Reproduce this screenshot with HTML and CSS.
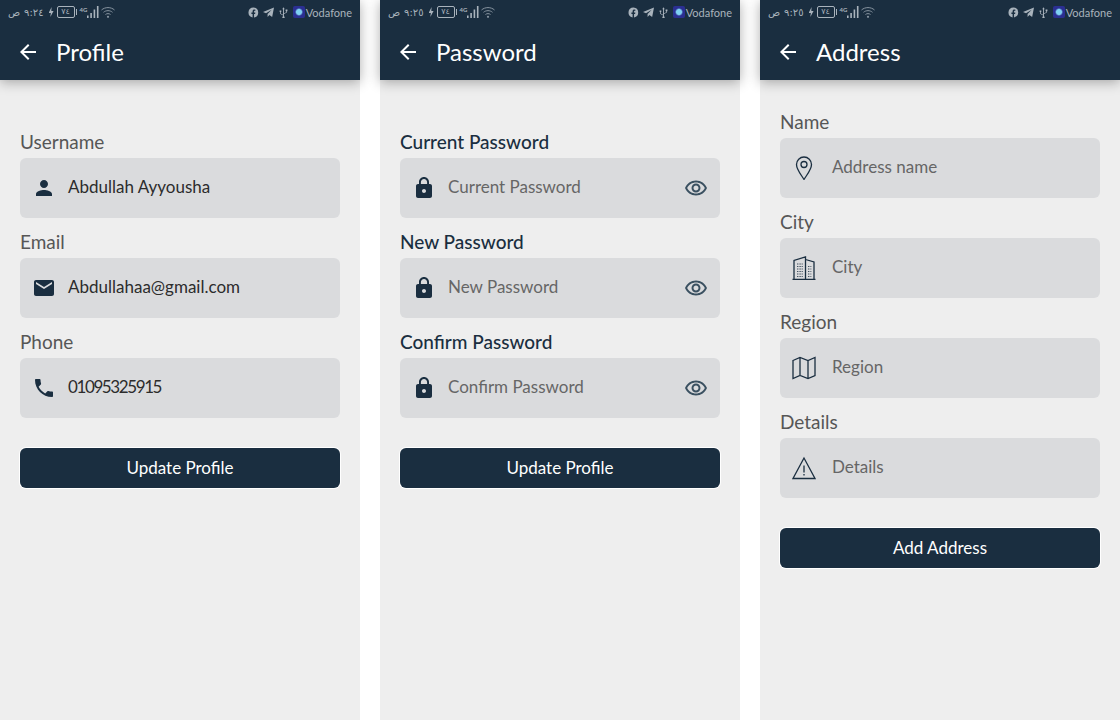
FILE: index.html
```html
<!DOCTYPE html>
<html lang="en">

<head>
    <meta charset="UTF-8">
    <title>Profile screens</title>
    <link rel="stylesheet" href="styles.css">
</head>

<body>

    <!-- shared icons -->
    <svg class="icon-defs" width="0" height="0">
        <symbol id="i-back" viewBox="0 0 24 24"><path d="M20 11H7.83l5.59-5.59L12 4l-8 8 8 8 1.41-1.41L7.83 13H20v-2z"/></symbol>
        <symbol id="i-person" viewBox="0 0 24 24"><path d="M12 12c2.21 0 4-1.79 4-4s-1.79-4-4-4-4 1.79-4 4 1.79 4 4 4zm0 2c-2.67 0-8 1.34-8 4v2h16v-2c0-2.66-5.33-4-8-4z"/></symbol>
        <symbol id="i-mail" viewBox="0 0 24 24"><path d="M20 4H4c-1.1 0-1.99.9-1.99 2L2 18c0 1.1.9 2 2 2h16c1.1 0 2-.9 2-2V6c0-1.1-.9-2-2-2zm0 4l-8 5-8-5V6l8 5 8-5v2z"/></symbol>
        <symbol id="i-phone" viewBox="0 0 24 24"><path d="M6.62 10.79c1.44 2.83 3.76 5.14 6.59 6.59l2.2-2.2c.27-.27.67-.36 1.02-.24 1.12.37 2.33.57 3.57.57.55 0 1 .45 1 1V20c0 .55-.45 1-1 1-9.39 0-17-7.61-17-17 0-.55.45-1 1-1h3.5c.55 0 1 .45 1 1 0 1.25.2 2.45.57 3.57.11.35.03.74-.25 1.02l-2.2 2.2z"/></symbol>
        <symbol id="i-lock" viewBox="0 0 24 24"><path d="M18 8h-1V6c0-2.76-2.24-5-5-5S7 3.24 7 6v2H6c-1.1 0-2 .9-2 2v10c0 1.1.9 2 2 2h12c1.1 0 2-.9 2-2V10c0-1.1-.9-2-2-2zm-6 9c-1.1 0-2-.9-2-2s.9-2 2-2 2 .9 2 2-.9 2-2 2zm3.100-9H8.900V6c0-1.710 1.390-3.100 3.100-3.100 1.710 0 3.100 1.390 3.100 3.100v2z"/></symbol>
        <symbol id="i-eye" viewBox="0 0 24 24"><path d="M12 6.500c3.790 0 7.170 2.130 8.820 5.500-1.650 3.370-5.020 5.500-8.820 5.500S4.830 15.370 3.180 12C4.830 8.630 8.210 6.500 12 6.500m0-2C7 4.500 2.730 7.610 1 12c1.730 4.390 6 7.500 11 7.500s9.270-3.110 11-7.500c-1.730-4.390-6-7.500-11-7.500zm0 5c1.380 0 2.500 1.120 2.500 2.500s-1.120 2.500-2.500 2.500-2.500-1.120-2.500-2.500 1.120-2.500 2.500-2.500m0-2c-2.480 0-4.500 2.020-4.500 4.500s2.020 4.500 4.500 4.500 4.500-2.020 4.500-4.500-2.020-4.500-4.500-4.500z"/></symbol>
        <symbol id="i-pin" viewBox="0 0 24 24"><g class="line"><path d="M12 23.500C9 18.500 4.500 13.500 4.500 8.500a7.500 7.500 0 0 1 15 0c0 5-4.500 10-7.500 15z"/><circle cx="12" cy="8.500" r="3"/></g></symbol>
        <symbol id="i-city" viewBox="0 0 24 24"><g class="line"><path d="M.5 23.500h23M2 23.500V4.500L13.500 1v22.500M13.500 3.500l8.500 2.500v17.500"/><path class="thin" d="M5 8h6M5 10.500h6M5 13h6M5 15.500h6M5 18h6M5 20.500h6M16 10.500h3.500M16 13h3.500M16 15.500h3.500M16 18h3.500M16 20.500h3.500"/></g></symbol>
        <symbol id="i-map" viewBox="0 0 24 24"><g class="line"><path d="M1 4.500l7-3 8 3 7-3v18l-7 3-8-3-7 3zM8 1.500v18M16 4.500v18"/></g></symbol>
        <symbol id="i-warn" viewBox="0 0 24 24"><g class="line"><path d="M12 2L1 22.500h22z"/><path d="M12 9.500v7M12 18v1.500"/></g></symbol>
        <symbol id="i-fb" viewBox="0 0 12 12"><path d="M6 .5a5.500 5.500 0 0 0-1 10.900V7.500H3.700V6H5V4.800C5 3.500 5.800 2.800 7 2.800l1.100.1v1.300h-.7c-.6 0-.8.400-.8.800V6h1.400l-.2 1.500H6.600v3.900A5.500 5.500 0 0 0 6 .5z"/></symbol>
        <symbol id="i-tg" viewBox="0 0 12 12"><path d="M12 .5L0 5.500l3.300 1.300L9.500 3 5 7.500v3.500l2-2.300 3 2.300z"/></symbol>
        <symbol id="i-usb" viewBox="0 0 12 12"><path d="M6 .2L4.600 2.500h.9v6L3 7V5.500h.6V3.800H1.800v1.700h.4v1.900l3.300 2v.7a1.200 1.200 0 1 0 1 0V7.700l3.300-1.600V4.500h.5V2.800H8.300v1.700H9v1.200L6.500 6.900V2.500h.9z"/></symbol>
        <symbol id="i-signal" viewBox="0 0 12 12"><path d="M0 9.500h1.600V12H0zM3.300 7h1.600v5H3.300zM6.600 3.500h1.600V12H6.600zM9.900 0h1.600v12H9.900z"/></symbol>
        <symbol id="i-wifi" viewBox="0 0 14 12"><g class="wifi"><path d="M.5 4C4 .8 10 .8 13.500 4M2.500 6.300c2.500-2.200 6.500-2.200 9 0M4.500 8.500c1.400-1.200 3.600-1.200 5 0"/></g><circle class="wifi-dot" cx="7" cy="10.800" r="1.100"/></symbol>
    </svg>

    <div class="screens">

        <!-- Profile -->
        <section class="phone">
            <header class="appbar">
                <div class="status">
                    <span class="status-left">
                        <span class="ar">ص</span><span class="ar">٩:٢٤</span>
                        <span class="bolt"></span>
                        <span class="battery"><span class="ar-small">٧٤</span></span>
                        <span class="net">4G</span>
                        <svg class="st-signal"><use href="#i-signal"/></svg>
                        <svg class="st-wifi"><use href="#i-wifi"/></svg>
                    </span>
                    <span class="status-right">
                        <svg class="st-icon"><use href="#i-fb"/></svg>
                        <svg class="st-icon"><use href="#i-tg"/></svg>
                        <svg class="st-icon"><use href="#i-usb"/></svg>
                        <span class="carrier-logo"></span>
                        <span class="carrier">Vodafone</span>
                    </span>
                </div>
                <div class="toolbar">
                    <svg class="back"><use href="#i-back"/></svg>
                    <h1>Profile</h1>
                </div>
            </header>
            <div class="form">
                <label class="field-label">Username</label>
                <div class="field">
                    <svg class="ic"><use href="#i-person"/></svg>
                    <span class="value">Abdullah Ayyousha</span>
                </div>
                <label class="field-label">Email</label>
                <div class="field">
                    <svg class="ic"><use href="#i-mail"/></svg>
                    <span class="value">Abdullahaa@gmail.com</span>
                </div>
                <label class="field-label">Phone</label>
                <div class="field">
                    <svg class="ic"><use href="#i-phone"/></svg>
                    <span class="value digits">01095325915</span>
                </div>
                <button class="submit">Update Profile</button>
            </div>
        </section>

        <!-- Password -->
        <section class="phone">
            <header class="appbar">
                <div class="status">
                    <span class="status-left">
                        <span class="ar">ص</span><span class="ar">٩:٢٥</span>
                        <span class="bolt"></span>
                        <span class="battery"><span class="ar-small">٧٤</span></span>
                        <span class="net">4G</span>
                        <svg class="st-signal"><use href="#i-signal"/></svg>
                        <svg class="st-wifi"><use href="#i-wifi"/></svg>
                    </span>
                    <span class="status-right">
                        <svg class="st-icon"><use href="#i-fb"/></svg>
                        <svg class="st-icon"><use href="#i-tg"/></svg>
                        <svg class="st-icon"><use href="#i-usb"/></svg>
                        <span class="carrier-logo"></span>
                        <span class="carrier">Vodafone</span>
                    </span>
                </div>
                <div class="toolbar">
                    <svg class="back"><use href="#i-back"/></svg>
                    <h1>Password</h1>
                </div>
            </header>
            <div class="form">
                <label class="field-label dark">Current Password</label>
                <div class="field">
                    <svg class="ic"><use href="#i-lock"/></svg>
                    <span class="hint">Current Password</span>
                    <svg class="ic eye"><use href="#i-eye"/></svg>
                </div>
                <label class="field-label dark">New Password</label>
                <div class="field">
                    <svg class="ic"><use href="#i-lock"/></svg>
                    <span class="hint">New Password</span>
                    <svg class="ic eye"><use href="#i-eye"/></svg>
                </div>
                <label class="field-label dark">Confirm Password</label>
                <div class="field">
                    <svg class="ic"><use href="#i-lock"/></svg>
                    <span class="hint">Confirm Password</span>
                    <svg class="ic eye"><use href="#i-eye"/></svg>
                </div>
                <button class="submit">Update Profile</button>
            </div>
        </section>

        <!-- Address -->
        <section class="phone">
            <header class="appbar">
                <div class="status">
                    <span class="status-left">
                        <span class="ar">ص</span><span class="ar">٩:٢٥</span>
                        <span class="bolt"></span>
                        <span class="battery"><span class="ar-small">٧٤</span></span>
                        <span class="net">4G</span>
                        <svg class="st-signal"><use href="#i-signal"/></svg>
                        <svg class="st-wifi"><use href="#i-wifi"/></svg>
                    </span>
                    <span class="status-right">
                        <svg class="st-icon"><use href="#i-fb"/></svg>
                        <svg class="st-icon"><use href="#i-tg"/></svg>
                        <svg class="st-icon"><use href="#i-usb"/></svg>
                        <span class="carrier-logo"></span>
                        <span class="carrier">Vodafone</span>
                    </span>
                </div>
                <div class="toolbar">
                    <svg class="back"><use href="#i-back"/></svg>
                    <h1>Address</h1>
                </div>
            </header>
            <div class="form form-address">
                <label class="field-label">Name</label>
                <div class="field wide">
                    <svg class="ic"><use href="#i-pin"/></svg>
                    <span class="hint">Address name</span>
                </div>
                <label class="field-label">City</label>
                <div class="field wide">
                    <svg class="ic"><use href="#i-city"/></svg>
                    <span class="hint">City</span>
                </div>
                <label class="field-label">Region</label>
                <div class="field wide">
                    <svg class="ic"><use href="#i-map"/></svg>
                    <span class="hint">Region</span>
                </div>
                <label class="field-label">Details</label>
                <div class="field wide">
                    <svg class="ic"><use href="#i-warn"/></svg>
                    <span class="hint">Details</span>
                </div>
                <button class="submit">Add Address</button>
            </div>
        </section>

    </div>

</body>

</html>
```

FILE: styles.css
```css
/* page */
html,
body {
    margin: 0;
    padding: 0;
    background-color: #ffffff;
}

body {
    font-family: "Lato", "Noto Sans", sans-serif;
}

.icon-defs {
    position: absolute;
}

.screens {
    display: flex;
    gap: 20px;
    height: 720px;
    overflow: hidden;
}

.phone {
    width: 360px;
    height: 720px;
    background-color: #eeeeee;
}

/* header */
.appbar {
    height: 80px;
    background-color: #1a2e40;
    box-shadow: 0 2px 12px rgba(0, 0, 0, 0.32);
    color: #ffffff;
}

.status {
    height: 24px;
    padding: 0 8px;
    display: flex;
    align-items: center;
    justify-content: space-between;
    color: #a9b3bc;
    fill: #a9b3bc;
}

.status-left,
.status-right {
    display: flex;
    align-items: center;
}

.ar {
    font-family: "DejaVu Sans", sans-serif;
    font-size: 10px;
    margin-right: 4px;
}

.ar-small {
    font-family: "DejaVu Sans", sans-serif;
    font-size: 8px;
    line-height: 10px;
}

.bolt {
    width: 5px;
    height: 10px;
    margin: 0 3px 0 1px;
    background-color: #a9b3bc;
    clip-path: polygon(60% 0, 0 60%, 45% 60%, 35% 100%, 100% 40%, 55% 40%);
}

.battery {
    position: relative;
    width: 16px;
    height: 10px;
    border: 1px solid #a9b3bc;
    border-radius: 2px;
    display: flex;
    align-items: center;
    justify-content: center;
}

.battery::after {
    content: "";
    position: absolute;
    top: 2px;
    right: -3px;
    width: 1px;
    height: 6px;
    background-color: #a9b3bc;
}

.net {
    font-size: 6px;
    font-weight: 700;
    margin: -6px 0 0 5px;
}

.st-signal {
    width: 12px;
    height: 12px;
}

.st-wifi {
    width: 14px;
    height: 12px;
    margin-left: 2px;
}

.wifi {
    fill: none;
    stroke: #8794a0;
    stroke-width: 1;
}

.wifi-dot {
    fill: #8794a0;
}

.st-icon {
    width: 11px;
    height: 11px;
    margin-right: 4px;
}

.carrier-logo {
    width: 12px;
    height: 12px;
    border-radius: 2px;
    background: radial-gradient(circle at 50% 50%, #7fd0f2 0 2.5px, #2b2f92 4px);
}

.carrier {
    font-size: 11px;
    margin-left: 1px;
}

.toolbar {
    height: 56px;
    display: flex;
    align-items: center;
    padding-left: 16px;
}

.back {
    width: 24px;
    height: 24px;
    fill: #ffffff;
    margin-right: 16px;
}

.toolbar h1 {
    margin: 0 0 2px;
    font-size: 24px;
    font-weight: 400;
}

/* form */
.form {
    padding: 50px 20px 0;
}

.form-address {
    padding-top: 30px;
}

.field-label {
    display: block;
    height: 24px;
    line-height: 24px;
    margin-bottom: 4px;
    font-size: 19px;
    color: #565656;
}

.field-label.dark {
    color: #1a2e40;
    font-weight: 500;
}

.field {
    height: 60px;
    margin-bottom: 12px;
    padding: 0 12px;
    display: flex;
    align-items: center;
    background-color: #dadbdd;
    border-radius: 6px;
}

.ic {
    width: 24px;
    height: 24px;
    flex: none;
    fill: #1a2e40;
    margin-right: 12px;
}

.field.wide .ic {
    margin-right: 16px;
}

.eye {
    margin: 0 0 0 auto;
    fill: #3a5060;
}

.line {
    fill: none;
    stroke: #1a2e40;
    stroke-width: 1.3;
}

.thin {
    stroke-width: 0.8;
    stroke-dasharray: 1 0.6;
}

.value,
.hint {
    font-size: 17px;
    margin-bottom: 3px;
}

.value {
    color: #2c2c2c;
}

.digits {
    letter-spacing: -1.4px;
}

.hint {
    color: #666666;
}

.submit {
    display: block;
    width: 100%;
    height: 40px;
    margin-top: 30px;
    padding: 0 0 2px;
    font-family: inherit;
    font-size: 17px;
    color: #ffffff;
    background-color: #1a2e40;
    border: none;
    border-radius: 6px;
    box-shadow: 0 0 0 1px #ffffff;
}
```
